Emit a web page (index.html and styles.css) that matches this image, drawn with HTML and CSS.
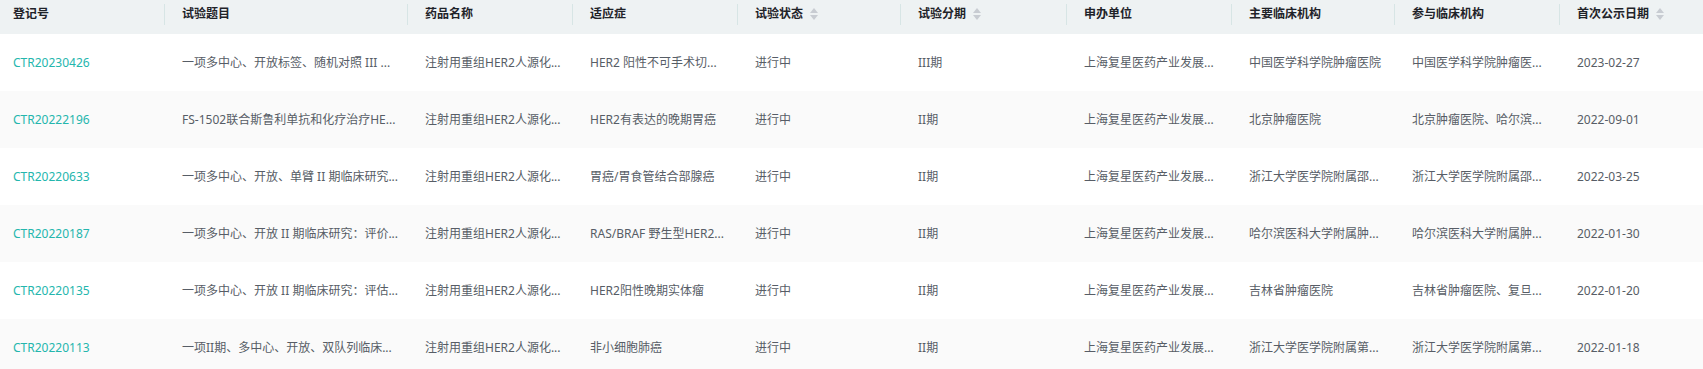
FILE: index.html
```html
<!DOCTYPE html>
<html lang="zh">
<head>
<meta charset="utf-8">
<title>试验列表</title>
<link rel="stylesheet" href="styles.css">
</head>
<body>
<div class="table">
  <div class="row head">
    <div class="cell first">登记号</div>
    <div class="cell sep">试验题目</div>
    <div class="cell sep">药品名称</div>
    <div class="cell sep">适应症</div>
    <div class="cell sep">试验状态<span class="sort"><i class="up"></i><i class="down"></i></span></div>
    <div class="cell sep">试验分期<span class="sort"><i class="up"></i><i class="down"></i></span></div>
    <div class="cell sep">申办单位</div>
    <div class="cell sep">主要临床机构</div>
    <div class="cell sep">参与临床机构</div>
    <div class="cell sep">首次公示日期<span class="sort"><i class="up"></i><i class="down"></i></span></div>
  </div>

  <div class="row">
    <div class="cell first link">CTR20230426</div>
    <div class="cell">一项多中心、开放标签、随机对照 III ...</div>
    <div class="cell">注射用重组HER2人源化...</div>
    <div class="cell">HER2 阳性不可手术切...</div>
    <div class="cell">进行中</div>
    <div class="cell">III期</div>
    <div class="cell">上海复星医药产业发展...</div>
    <div class="cell">中国医学科学院肿瘤医院</div>
    <div class="cell">中国医学科学院肿瘤医...</div>
    <div class="cell">2023-02-27</div>
  </div>

  <div class="row alt">
    <div class="cell first link">CTR20222196</div>
    <div class="cell">FS-1502联合斯鲁利单抗和化疗治疗HE...</div>
    <div class="cell">注射用重组HER2人源化...</div>
    <div class="cell">HER2有表达的晚期胃癌</div>
    <div class="cell">进行中</div>
    <div class="cell">II期</div>
    <div class="cell">上海复星医药产业发展...</div>
    <div class="cell">北京肿瘤医院</div>
    <div class="cell">北京肿瘤医院、哈尔滨...</div>
    <div class="cell">2022-09-01</div>
  </div>

  <div class="row">
    <div class="cell first link">CTR20220633</div>
    <div class="cell">一项多中心、开放、单臂 II 期临床研究...</div>
    <div class="cell">注射用重组HER2人源化...</div>
    <div class="cell">胃癌/胃食管结合部腺癌</div>
    <div class="cell">进行中</div>
    <div class="cell">II期</div>
    <div class="cell">上海复星医药产业发展...</div>
    <div class="cell">浙江大学医学院附属邵...</div>
    <div class="cell">浙江大学医学院附属邵...</div>
    <div class="cell">2022-03-25</div>
  </div>

  <div class="row alt">
    <div class="cell first link">CTR20220187</div>
    <div class="cell">一项多中心、开放 II 期临床研究：评价...</div>
    <div class="cell">注射用重组HER2人源化...</div>
    <div class="cell">RAS/BRAF 野生型HER2...</div>
    <div class="cell">进行中</div>
    <div class="cell">II期</div>
    <div class="cell">上海复星医药产业发展...</div>
    <div class="cell">哈尔滨医科大学附属肿...</div>
    <div class="cell">哈尔滨医科大学附属肿...</div>
    <div class="cell">2022-01-30</div>
  </div>

  <div class="row">
    <div class="cell first link">CTR20220135</div>
    <div class="cell">一项多中心、开放 II 期临床研究：评估...</div>
    <div class="cell">注射用重组HER2人源化...</div>
    <div class="cell">HER2阳性晚期实体瘤</div>
    <div class="cell">进行中</div>
    <div class="cell">II期</div>
    <div class="cell">上海复星医药产业发展...</div>
    <div class="cell">吉林省肿瘤医院</div>
    <div class="cell">吉林省肿瘤医院、复旦...</div>
    <div class="cell">2022-01-20</div>
  </div>

  <div class="row alt">
    <div class="cell first link">CTR20220113</div>
    <div class="cell">一项II期、多中心、开放、双队列临床...</div>
    <div class="cell">注射用重组HER2人源化...</div>
    <div class="cell">非小细胞肺癌</div>
    <div class="cell">进行中</div>
    <div class="cell">II期</div>
    <div class="cell">上海复星医药产业发展...</div>
    <div class="cell">浙江大学医学院附属第...</div>
    <div class="cell">浙江大学医学院附属第...</div>
    <div class="cell">2022-01-18</div>
  </div>
</div>
</body>
</html>
```

FILE: styles.css
```css
* { box-sizing: border-box; }
html, body {
  margin: 0;
  padding: 0;
  background: #ffffff;
}
body {
  font-family: "Noto Sans", "Noto Sans CJK SC", sans-serif;
  font-size: 12px;
  color: #575d66;
}
.table {
  width: 1703px;
}
.row {
  display: grid;
  grid-template-columns: 164px 243px 165px 165px 163px 166px 165px 163px 165px 144px;
  height: 57px;
  align-items: center;
  background: #ffffff;
}
.row.alt {
  background: #fafafa;
}
.row.head {
  height: 34px;
  align-items: start;
  background: #eef2f3;
  color: #1f2329;
  font-weight: 700;
}
.cell {
  padding: 0 8px 0 18px;
  white-space: nowrap;
  overflow: hidden;
  text-overflow: ellipsis;
  line-height: 20px;
}
.cell.first {
  padding-left: 13px;
}
.head .cell {
  position: relative;
  padding-top: 4px;
  height: 34px;
  display: flex;
  align-items: flex-start;
}
.head .cell.sep::before {
  content: "";
  position: absolute;
  left: 0;
  top: 4px;
  width: 1px;
  height: 21px;
  background: #d7e5e5;
}
.link {
  color: #24b6ad;
}
.sort {
  display: inline-flex;
  flex-direction: column;
  gap: 2px;
  margin-left: 7px;
  margin-top: 4px;
}
.sort i {
  display: block;
  width: 0;
  height: 0;
  border-left: 4px solid transparent;
  border-right: 4px solid transparent;
}
.sort .up {
  border-bottom: 5px solid #c8ccd2;
}
.sort .down {
  border-top: 5px solid #c8ccd2;
}
```
